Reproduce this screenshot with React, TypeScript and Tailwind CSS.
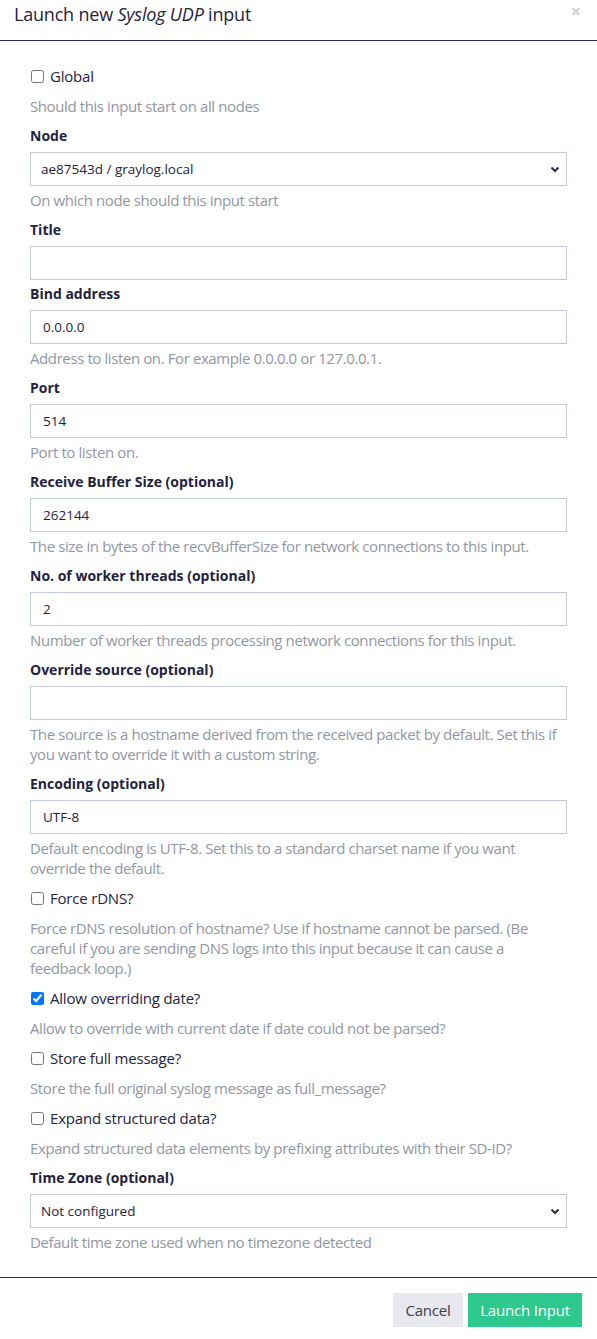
import { ReactNode } from 'react'

const font = { fontFamily: '"Open Sans", "Noto Sans", sans-serif' }

function Help({ children }: { children: ReactNode }) {
  return <p className="mt-[4px] mb-[10px] text-[15px] leading-[20px] text-[#9297a4] tracking-[-0.4px]">{children}</p>
}

function Label({ children }: { children: ReactNode }) {
  return <label className="block mb-[6px] text-[14px] leading-[20px] font-bold text-[#1f2340]">{children}</label>
}

function TextField({ label, value, help }: { label: string; value?: string; help?: ReactNode }) {
  return (
    <div className={help ? '' : 'mb-[4px]'}>
      <Label>{label}</Label>
      <input
        readOnly
        value={value ?? ''}
        className="block w-full h-[34px] px-[12px] border border-[#c4cadc] bg-white text-[13.5px] text-[#1f2340] outline-none"
      />
      {help && <Help>{help}</Help>}
    </div>
  )
}

function SelectField({ label, value, help }: { label: string; value: string; help: ReactNode }) {
  return (
    <div>
      <Label>{label}</Label>
      <div className="relative">
        <select className="block w-full h-[34px] pl-[10px] pr-8 border border-[#c4cadc] bg-white text-[13.5px] text-[#1f2340] appearance-none outline-none">
          <option>{value}</option>
        </select>
        <svg className="absolute right-[7px] top-[14px] pointer-events-none" width="10" height="7" viewBox="0 0 10 7">
          <path d="M1.5 1.5 L5 5 L8.5 1.5" fill="none" stroke="#2b2f45" strokeWidth="2" />
        </svg>
      </div>
      <Help>{help}</Help>
    </div>
  )
}

function CheckField({ label, checked, help }: { label: string; checked?: boolean; help: ReactNode }) {
  return (
    <div>
      <label className="flex items-center h-[20px] text-[15px] tracking-[-0.2px] text-[#1f2340]">
        <input type="checkbox" readOnly checked={!!checked} className="m-0 ml-[1px] w-[13px] h-[13px]" />
        <span className="ml-[6px]">{label}</span>
      </label>
      <p className="mt-[10px] mb-[10px] text-[15px] leading-[20px] text-[#9297a4] tracking-[-0.4px]">{help}</p>
    </div>
  )
}

export default function App() {
  return (
    <div className="w-[597px] min-h-[1339px] bg-white" style={font}>
      <div className="relative h-[41px] border-b border-[#2c2a4f] px-[14px] pt-[1px]">
        <h4 className="text-[18px] leading-[26px] tracking-[-0.2px] text-[#1f2340]">
          Launch new <em>Syslog UDP</em> input
        </h4>
        <span className="absolute right-[16px] top-[-2px] text-[18px] font-bold text-[#d0d2d8]">×</span>
      </div>

      <div className="px-[30px] pt-[25px] pb-[15px]">
        <CheckField label="Global" help="Should this input start on all nodes" />
        <SelectField label="Node" value="ae87543d / graylog.local" help="On which node should this input start" />
        <TextField label="Title" />
        <TextField label="Bind address" value="0.0.0.0" help="Address to listen on. For example 0.0.0.0 or 127.0.0.1." />
        <TextField label="Port" value="514" help="Port to listen on." />
        <TextField
          label="Receive Buffer Size (optional)"
          value="262144"
          help="The size in bytes of the recvBufferSize for network connections to this input."
        />
        <TextField
          label="No. of worker threads (optional)"
          value="2"
          help="Number of worker threads processing network connections for this input."
        />
        <TextField
          label="Override source (optional)"
          help="The source is a hostname derived from the received packet by default. Set this if you want to override it with a custom string."
        />
        <TextField
          label="Encoding (optional)"
          value="UTF-8"
          help="Default encoding is UTF-8. Set this to a standard charset name if you want override the default."
        />
        <CheckField
          label="Force rDNS?"
          help="Force rDNS resolution of hostname? Use if hostname cannot be parsed. (Be careful if you are sending DNS logs into this input because it can cause a feedback loop.)"
        />
        <CheckField
          label="Allow overriding date?"
          checked
          help="Allow to override with current date if date could not be parsed?"
        />
        <CheckField label="Store full message?" help="Store the full original syslog message as full_message?" />
        <CheckField
          label="Expand structured data?"
          help="Expand structured data elements by prefixing attributes with their SD-ID?"
        />
        <SelectField label="Time Zone (optional)" value="Not configured" help="Default time zone used when no timezone detected" />
      </div>

      <div className="border-t border-[#2c2a4f] px-[15px] pt-[15px] pb-[14px] flex justify-end gap-[5px]">
        <button className="h-[34px] w-[70px] bg-[#e8e9ee] text-[#3a3e52] text-[15px] tracking-[-0.2px]">Cancel</button>
        <button className="h-[34px] w-[114px] bg-[#2ec98e] text-white text-[15px] tracking-[-0.2px]">Launch Input</button>
      </div>
    </div>
  )
}
